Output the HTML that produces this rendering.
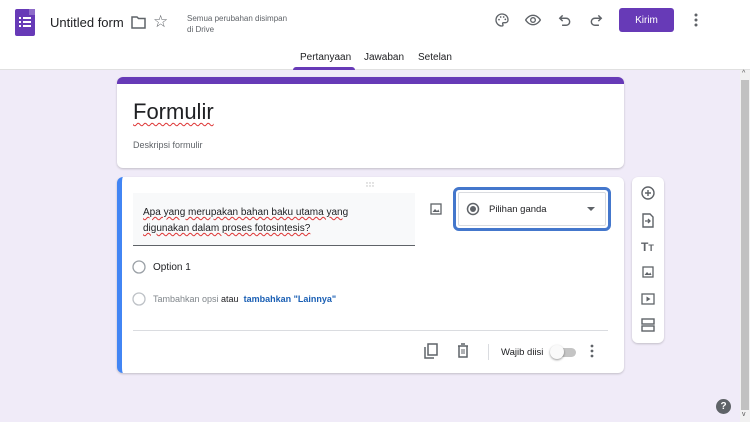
<!DOCTYPE html>
<html><head><style>
*{box-sizing:border-box;margin:0;padding:0}
body{width:750px;height:422px;overflow:hidden;background:#f0ebf8;font-family:"Liberation Sans",sans-serif;position:relative;color:#202124}
.a{position:absolute}
svg{display:block}
</style></head><body>
<div class="a" style="left:0;top:0;width:750px;height:70px;background:#fff;border-bottom:1px solid #e0e0e0"></div>
<div class="a" style="left:15px;top:9px;width:20px;height:27px;background:#673ab7;border-radius:2px"></div>
<div class="a" style="left:29px;top:9px;width:6px;height:6px;background:#8e6cc9"></div>
<svg class="a" style="left:19px;top:16px" width="12" height="12"><g fill="#fff"><rect x="0" y="1" width="2" height="2"/><rect x="4" y="1" width="8" height="2"/><rect x="0" y="5" width="2" height="2"/><rect x="4" y="5" width="8" height="2"/><rect x="0" y="9" width="2" height="2"/><rect x="4" y="9" width="8" height="2"/></g></svg>
<div class="a" style="left:50px;top:15px;font-size:13px">Untitled form</div>
<svg class="a" style="left:131px;top:16px" width="15" height="13"><path d="M1 1h5l1.5 1.5H14v9.5H1z" fill="none" stroke="#5f6368" stroke-width="1.5"/></svg>
<div class="a" style="left:153px;top:12px;font-size:17px;color:#5f6368">☆</div>
<div class="a" style="left:187px;top:13px;font-size:8px;color:#5f6368;line-height:11px">Semua perubahan disimpan<br>di Drive</div>
<svg class="a" style="left:494px;top:12px" width="16" height="16" viewBox="0 0 24 24"><path d="M12 3a9 9 0 0 0 0 18c1 0 1.5-.7 1.5-1.5 0-.8-.6-1.1-.6-1.9 0-.8.7-1.6 1.6-1.6H17a4 4 0 0 0 4-4C21 6.6 17 3 12 3z" fill="none" stroke="#5f6368" stroke-width="2"/><circle cx="7.5" cy="11.5" r="1.3" fill="#5f6368"/><circle cx="10" cy="7.5" r="1.3" fill="#5f6368"/><circle cx="14.5" cy="7.5" r="1.3" fill="#5f6368"/><circle cx="17" cy="11" r="1.3" fill="#5f6368"/></svg>
<svg class="a" style="left:524px;top:12px" width="18" height="16" viewBox="0 0 24 24"><path d="M1 12s4-7 11-7 11 7 11 7-4 7-11 7S1 12 1 12z" fill="none" stroke="#5f6368" stroke-width="2"/><circle cx="12" cy="12" r="3.5" fill="none" stroke="#5f6368" stroke-width="2"/></svg>
<svg class="a" style="left:558px;top:12px" width="14" height="16" viewBox="0 0 24 24"><path d="M8 4 3 9l5 5M3 9h11a6 6 0 0 1 0 12H7" fill="none" stroke="#5f6368" stroke-width="2.5"/></svg>
<svg class="a" style="left:589px;top:12px" width="14" height="16" viewBox="0 0 24 24"><path d="M16 4l5 5-5 5M21 9H10a6 6 0 0 0 0 12h7" fill="none" stroke="#5f6368" stroke-width="2.5"/></svg>
<div class="a" style="left:619px;top:8px;width:55px;height:24px;background:#673ab7;border-radius:3px;color:#fff;font-size:10px;text-align:center;padding-top:7px;line-height:11px">Kirim</div>
<svg class="a" style="left:693px;top:13px" width="6" height="14"><circle cx="3" cy="2" r="1.5" fill="#5f6368"/><circle cx="3" cy="7" r="1.5" fill="#5f6368"/><circle cx="3" cy="12" r="1.5" fill="#5f6368"/></svg>
<div class="a" style="left:300px;top:52px;font-size:10px;color:#202124">Pertanyaan</div>
<div class="a" style="left:293px;top:67px;width:62px;height:3px;background:#673ab7;border-radius:3px 3px 0 0"></div>
<div class="a" style="left:364px;top:52px;font-size:10px">Jawaban</div>
<div class="a" style="left:418px;top:52px;font-size:10px">Setelan</div>
<div class="a" style="left:117px;top:77px;width:507px;height:91px;background:#fff;border-radius:6px;border-top:7px solid #673ab7;box-shadow:0 1px 2px rgba(0,0,0,.2)"></div>
<div class="a" style="left:133px;top:99px;font-size:22px;text-decoration:underline wavy #d33;text-decoration-thickness:1px;text-underline-offset:3px">Formulir</div>
<div class="a" style="left:133px;top:140px;font-size:9px;color:#5f6368">Deskripsi formulir</div>
<div class="a" style="left:117px;top:177px;width:507px;height:196px;background:#fff;border-radius:6px;border-left:5px solid #4285f4;box-shadow:0 1px 2px rgba(0,0,0,.2)"></div>
<svg class="a" style="left:366px;top:182px" width="10" height="6"><g fill="#bbb"><circle cx="1" cy="1" r=".7"/><circle cx="4" cy="1" r=".7"/><circle cx="7" cy="1" r=".7"/><circle cx="1" cy="4" r=".7"/><circle cx="4" cy="4" r=".7"/><circle cx="7" cy="4" r=".7"/></g></svg>
<div class="a" style="left:133px;top:193px;width:282px;height:53px;background:#f8f9fa;border-bottom:1px solid #5f6368"></div>
<div class="a" style="left:143px;top:205px;font-size:10px;line-height:16px;color:#202124;text-decoration:underline wavy #d33;text-decoration-thickness:1px">Apa yang merupakan bahan baku utama yang<br>digunakan dalam proses fotosintesis?</div>
<svg class="a" style="left:430px;top:203px" width="12" height="12"><rect x="1" y="1" width="10" height="10" fill="none" stroke="#5f6368" stroke-width="1.3"/><path d="M2.5 9l2.5-3 2 2 1.3-1.5L9.5 9z" fill="#5f6368"/></svg>
<div class="a" style="left:453px;top:187px;width:158px;height:44px;border:3px solid #4477cc;border-radius:6px;background:#fff"></div>
<div class="a" style="left:458px;top:192px;width:148px;height:34px;border:1px solid #dadce0;border-radius:2px"></div>
<svg class="a" style="left:466px;top:202px" width="14" height="14"><circle cx="7" cy="7" r="5.5" fill="none" stroke="#5f6368" stroke-width="1.5"/><circle cx="7" cy="7" r="3" fill="#5f6368"/></svg>
<div class="a" style="left:489px;top:204px;font-size:9.5px">Pilihan ganda</div>
<svg class="a" style="left:587px;top:207px" width="8" height="4"><path d="M0 0h8L4 4z" fill="#5f6368"/></svg>
<svg class="a" style="left:132px;top:260px" width="14" height="14"><circle cx="7" cy="7" r="6" fill="none" stroke="#9aa0a6" stroke-width="1.3"/></svg>
<div class="a" style="left:153px;top:262px;font-size:10px">Option 1</div>
<svg class="a" style="left:132px;top:292px" width="14" height="14"><circle cx="7" cy="7" r="6" fill="none" stroke="#bdc1c6" stroke-width="1.3"/></svg>
<div class="a" style="left:153px;top:294px;font-size:9px;color:#80868b">Tambahkan opsi <span style="color:#202124">atau</span> &nbsp;<span style="color:#1a5fb4;font-weight:bold">tambahkan "Lainnya"</span></div>
<div class="a" style="left:133px;top:330px;width:475px;height:1px;background:#dadce0"></div>
<svg class="a" style="left:424px;top:343px" width="14" height="16"><path d="M4 1h9v11H4z" fill="none" stroke="#5f6368" stroke-width="1.5"/><path d="M1 4v11h9" fill="none" stroke="#5f6368" stroke-width="1.5"/></svg>
<svg class="a" style="left:457px;top:343px" width="12" height="15"><path d="M1 3h10M4 1h4M2 3v11h8V3" fill="none" stroke="#5f6368" stroke-width="1.5"/><path d="M5 6v5M7 6v5" stroke="#5f6368"/></svg>
<div class="a" style="left:488px;top:344px;width:1px;height:16px;background:#dadce0"></div>
<div class="a" style="left:501px;top:347px;font-size:9.5px">Wajib diisi</div>
<div class="a" style="left:552px;top:348px;width:24px;height:9px;border-radius:5px;background:#c4c4c4"></div>
<div class="a" style="left:550px;top:345px;width:14px;height:14px;border-radius:50%;background:#fafafa;box-shadow:0 1px 2px rgba(0,0,0,.4)"></div>
<svg class="a" style="left:589px;top:344px" width="6" height="14"><circle cx="3" cy="2" r="1.4" fill="#5f6368"/><circle cx="3" cy="7" r="1.4" fill="#5f6368"/><circle cx="3" cy="12" r="1.4" fill="#5f6368"/></svg>
<div class="a" style="left:632px;top:177px;width:32px;height:166px;background:#fff;border-radius:6px;box-shadow:0 1px 2px rgba(0,0,0,.2)"></div>
<svg class="a" style="left:641px;top:186px" width="14" height="14"><circle cx="7" cy="7" r="6" fill="none" stroke="#5f6368" stroke-width="1.4"/><path d="M7 4v6M4 7h6" stroke="#5f6368" stroke-width="1.4"/></svg>
<svg class="a" style="left:642px;top:213px" width="12" height="15"><path d="M1 1h7l3 3v10H1z" fill="none" stroke="#5f6368" stroke-width="1.4"/><path d="M3 8h5M6 6l2 2-2 2" fill="none" stroke="#5f6368" stroke-width="1.3"/></svg>
<div class="a" style="left:641px;top:240px;font-size:12px;font-weight:bold;color:#5f6368">T<span style="font-size:9px">T</span></div>
<svg class="a" style="left:642px;top:266px" width="12" height="12"><rect x="1" y="1" width="10" height="10" fill="none" stroke="#5f6368" stroke-width="1.3"/><path d="M2.5 9l2.5-3 2 2 1.3-1.5L9.5 9z" fill="#5f6368"/></svg>
<svg class="a" style="left:641px;top:293px" width="14" height="12"><rect x="1" y="1" width="12" height="10" fill="none" stroke="#5f6368" stroke-width="1.3"/><path d="M5.5 3.5v5l4-2.5z" fill="#5f6368"/></svg>
<svg class="a" style="left:641px;top:318px" width="14" height="14"><rect x="1" y="1" width="12" height="5" fill="none" stroke="#5f6368" stroke-width="1.4"/><rect x="1" y="8" width="12" height="5" fill="none" stroke="#5f6368" stroke-width="1.4"/></svg>
<div class="a" style="left:740px;top:70px;width:10px;height:352px;background:#f1f1f1"></div>
<div class="a" style="left:741px;top:80px;width:8px;height:330px;background:#c1c1c1"></div>
<div class="a" style="left:742px;top:70px;font-size:7px;color:#555">^</div>
<div class="a" style="left:742px;top:411px;font-size:7px;color:#555">v</div>
<div class="a" style="left:716px;top:399px;width:15px;height:15px;border-radius:50%;background:#5f6368;color:#fff;font-size:10px;font-weight:bold;text-align:center;line-height:15px">?</div>
</body></html>
